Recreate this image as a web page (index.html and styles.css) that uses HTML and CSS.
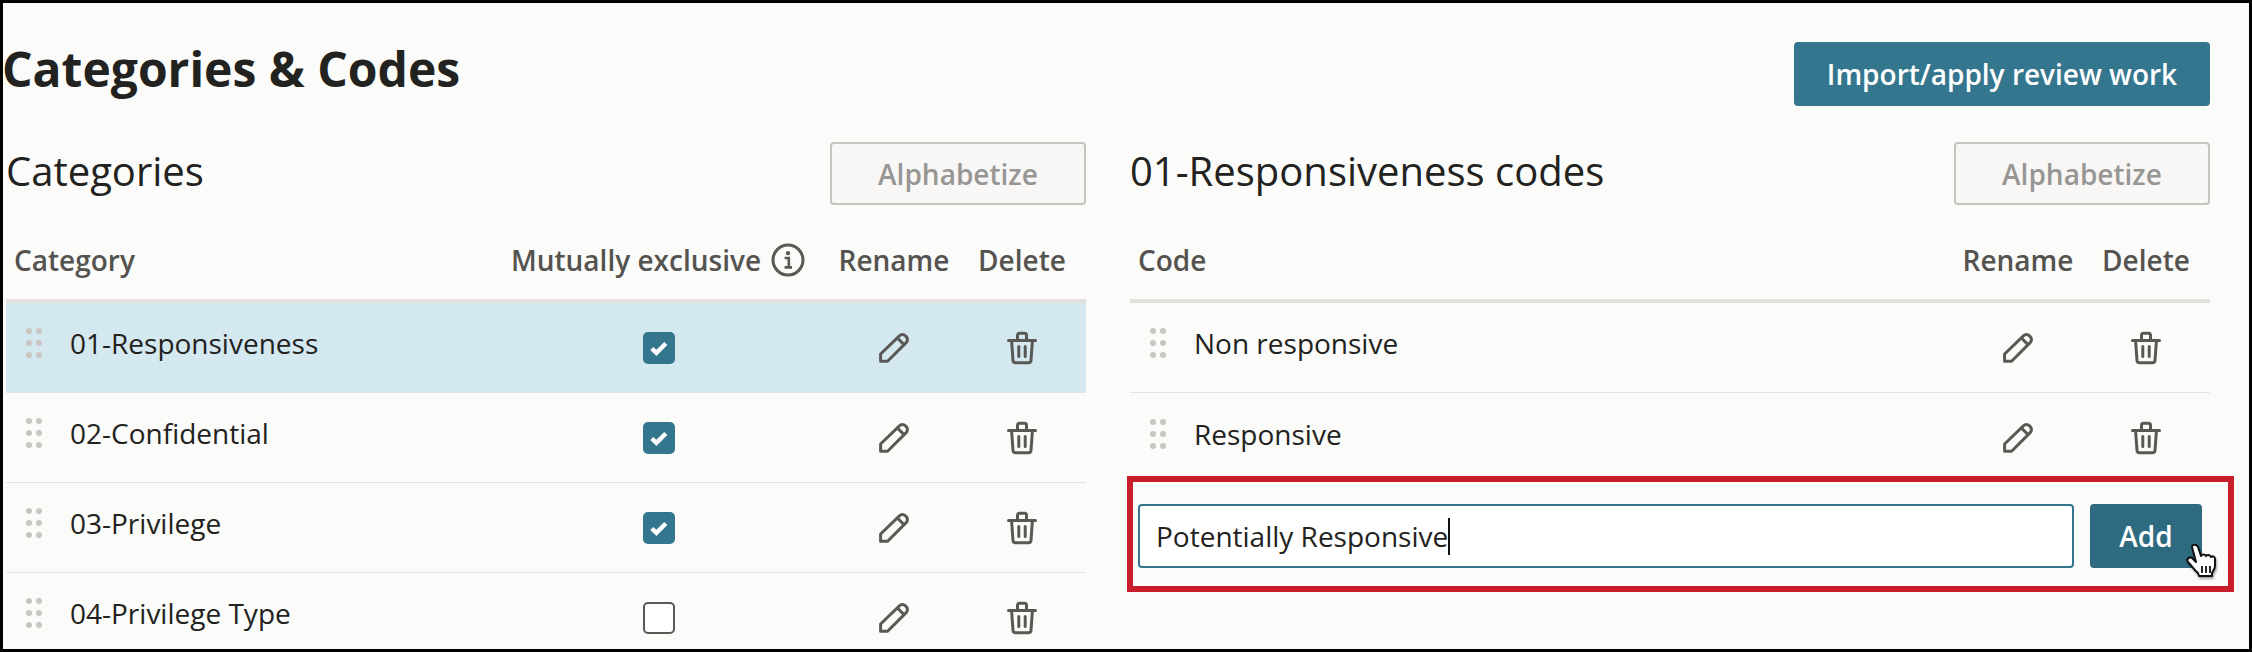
FILE: index.html
```html
<!DOCTYPE html>
<html lang="en">
<head>
<meta charset="utf-8">
<title>Categories &amp; Codes</title>
<link rel="stylesheet" href="styles.css">
</head>
<body>
<svg class="defs" width="0" height="0" aria-hidden="true">
  <defs>
    <symbol id="grip" viewBox="0 0 16 30"><g fill="#c9c6c2"><circle cx="3" cy="3" r="3"/><circle cx="13" cy="3" r="3"/><circle cx="3" cy="15" r="3"/><circle cx="13" cy="15" r="3"/><circle cx="3" cy="27" r="3"/><circle cx="13" cy="27" r="3"/></g></symbol>
    <symbol id="pencil" viewBox="0 0 30 30"><path d="M1.6 28.2V21L20.4 2.8a4.2 4.2 0 0 1 6 0l.8.8a4.2 4.2 0 0 1 0 6L8.6 28.2ZM18.4 5l6.6 6.6" fill="none" stroke="#5a5855" stroke-width="3" stroke-linejoin="round"/></symbol>
    <symbol id="trash" viewBox="0 0 30 34"><g fill="none" stroke="#5a5855" stroke-width="3" stroke-linecap="round" stroke-linejoin="round"><path d="M1.5 9.5h27M10.5 9V4.200a2 2 0 0 1 2-2h5a2 2 0 0 1 2 2V9M4.600 10l1.400 19.400a2.600 2.600 0 0 0 2.600 2.400h12.800a2.600 2.600 0 0 0 2.600-2.400L25.400 10M11.800 15.500v10M18.200 15.500v10"/></g></symbol>
    <symbol id="tick" viewBox="0 0 32 32"><path d="M8.800 16.500l4.600 4.400 9.400-9.400" fill="none" stroke="#fff" stroke-width="4.400"/></symbol>
  </defs>
</svg>
<main class="page">
  <header class="top">
    <h1 class="title">Categories &amp; Codes</h1>
    <button class="btn btn-primary btn-import" type="button">Import/apply review work</button>
  </header>
  <div class="panels">
    <section class="panel">
      <div class="panel-head">
        <h2 class="panel-title">Categories</h2>
        <button class="btn btn-muted" type="button">Alphabetize</button>
      </div>
      <div class="grid-row head-row has-mutual">
        <span class="col-name">Category</span>
        <span class="col-mid col-mutual">Mutually exclusive
          <svg class="info" viewBox="0 0 34 34" aria-hidden="true"><circle cx="17" cy="17" r="15" fill="none" stroke="#5a5855" stroke-width="3"/><circle cx="17" cy="10.200" r="2.100" fill="#5a5855"/><path d="M13.600 15h4.200v8.600M13.600 24.400h7.400" fill="none" stroke="#5a5855" stroke-width="2.600"/></svg>
        </span>
        <span class="col-mid">Rename</span>
        <span class="col-mid">Delete</span>
      </div>
      <div class="grid-row item-row has-mutual is-selected">
        <span class="cell-name"><svg class="grip"><use href="#grip"/></svg><span class="label">01-Responsiveness</span></span>
        <span class="box box-on"><svg><use href="#tick"/></svg></span>
        <svg class="icon-pencil"><use href="#pencil"/></svg>
        <svg class="icon-trash"><use href="#trash"/></svg>
      </div>
      <div class="grid-row item-row has-mutual">
        <span class="cell-name"><svg class="grip"><use href="#grip"/></svg><span class="label">02-Confidential</span></span>
        <span class="box box-on"><svg><use href="#tick"/></svg></span>
        <svg class="icon-pencil"><use href="#pencil"/></svg>
        <svg class="icon-trash"><use href="#trash"/></svg>
      </div>
      <div class="grid-row item-row has-mutual">
        <span class="cell-name"><svg class="grip"><use href="#grip"/></svg><span class="label">03-Privilege</span></span>
        <span class="box box-on"><svg><use href="#tick"/></svg></span>
        <svg class="icon-pencil"><use href="#pencil"/></svg>
        <svg class="icon-trash"><use href="#trash"/></svg>
      </div>
      <div class="grid-row item-row has-mutual">
        <span class="cell-name"><svg class="grip"><use href="#grip"/></svg><span class="label">04-Privilege Type</span></span>
        <span class="box"></span>
        <svg class="icon-pencil"><use href="#pencil"/></svg>
        <svg class="icon-trash"><use href="#trash"/></svg>
      </div>
    </section>
    <section class="panel">
      <div class="panel-head">
        <h2 class="panel-title">01-Responsiveness codes</h2>
        <button class="btn btn-muted" type="button">Alphabetize</button>
      </div>
      <div class="grid-row head-row">
        <span class="col-name">Code</span>
        <span class="col-mid">Rename</span>
        <span class="col-mid">Delete</span>
      </div>
      <div class="grid-row item-row">
        <span class="cell-name"><svg class="grip"><use href="#grip"/></svg><span class="label">Non responsive</span></span>
        <svg class="icon-pencil"><use href="#pencil"/></svg>
        <svg class="icon-trash"><use href="#trash"/></svg>
      </div>
      <div class="grid-row item-row item-last">
        <span class="cell-name"><svg class="grip"><use href="#grip"/></svg><span class="label">Responsive</span></span>
        <svg class="icon-pencil"><use href="#pencil"/></svg>
        <svg class="icon-trash"><use href="#trash"/></svg>
      </div>
      <div class="add-row">
        <div class="field">Potentially Responsive<span class="caret"></span></div>
        <button class="btn btn-add" type="button">Add</button>
        <span class="callout"></span>
        <svg class="hand" viewBox="0 0 32 36" aria-hidden="true"><path d="M6 3c0-3 5-3 6 0l3 9c1-2 4-2 5 0 1-2 4-1 5 1 1-1 4-1 4 2v7c0 3-2 5-3 7v3H13l-1-3C9 27 5 21 2 18c-2-2 1-6 4-4l4 4Z" fill="#fff" stroke="#111" stroke-width="2" stroke-linejoin="round"/><path d="M16 22v7M20 22v7M24 22v7" stroke="#111" stroke-width="1.800"/></svg>
      </div>
    </section>
  </div>
</main>
</body>
</html>
```
FILE: styles.css
```css
* { box-sizing: border-box; }
html, body { margin: 0; height: 100%; }
body {
  background: #fbfbf9;
  color: #222220;
  font-family: "Open Sans", "Noto Sans", sans-serif;
  overflow: hidden;
}
.defs { position: absolute; }
.page {
  height: 652px;
  border: 3px solid #000;
  padding: 39px 39px 0 0;
  overflow: hidden;
  background: #fbfbf9;
}
.top {
  display: flex;
  justify-content: space-between;
  align-items: center;
  height: 64px;
}
.title {
  margin: 0 0 11px -1px;
  font-size: 48px;
  line-height: 64px;
  font-weight: 700;
  color: #222220;
}
.btn {
  font-family: inherit;
  border-radius: 4px;
  font-size: 28px;
  font-weight: 600;
  cursor: pointer;
}
.btn-primary, .btn-add {
  background: #35768f;
  color: #fff;
  border: 0;
}
.btn-import { width: 416px; height: 64px; padding: 0; }
.panels {
  display: grid;
  grid-template-columns: 1080px 1080px;
  column-gap: 44px;
  margin-top: 36px;
  padding-left: 3px;
}
.panel-head {
  display: flex;
  justify-content: space-between;
  align-items: center;
  height: 63px;
}
.panel-title {
  margin: 0 0 6px;
  font-size: 40px;
  font-weight: 400;
  line-height: 50px;
}
.btn-muted {
  width: 256px;
  height: 63px;
  padding: 0;
  background: #f8f7f5;
  color: #979694;
  border: 2px solid #c4c3c0;
}
.grid-row {
  display: grid;
  grid-template-columns: 1fr 128px 128px;
  align-items: center;
  justify-items: center;
}
.has-mutual { grid-template-columns: 1fr 342px 128px 128px; }
.head-row {
  height: 98px;
  border-bottom: 4px solid #e2e1de;
  color: #555350;
  font-size: 28px;
  font-weight: 600;
  padding-top: 15px;
}
.col-name { justify-self: start; padding-left: 8px; }
.col-mid { white-space: nowrap; }
.col-mutual {
  display: inline-flex;
  align-items: center;
  gap: 10px;
  margin-right: 2px;
}
.info { width: 34px; height: 34px; }
.item-row {
  height: 90px;
  border-bottom: 1.5px solid #e4e3e0;
}
.item-last { border-bottom: 0; }
.is-selected { background: #d4e8ef; }
.cell-name {
  justify-self: start;
  display: flex;
  align-items: center;
  font-size: 28px;
  padding-left: 20px;
  padding-bottom: 9px;
  gap: 28px;
}
.grip { width: 16px; height: 30px; flex: none; }
.label { white-space: nowrap; }
.box {
  display: block;
  width: 32px;
  height: 32px;
  border-radius: 5px;
  border: 2px solid #5a5855;
  background: #fff;
}
.box-on { border: 0; background: #35768f; }
.box svg { display: block; width: 32px; height: 32px; }
.icon-pencil { width: 30px; height: 30px; }
.icon-trash { width: 30px; height: 34px; }
.add-row {
  position: relative;
  display: flex;
  gap: 16px;
  padding: 21px 8px 0;
}
.field {
  flex: 1;
  height: 64px;
  background: #fff;
  border: 2px solid #35768f;
  border-radius: 4px;
  padding-left: 16px;
  font-size: 28px;
  line-height: 60px;
  display: flex;
  align-items: center;
}
.caret { display: block; width: 2px; height: 37px; background: #111; }
.btn-add {
  width: 112px;
  height: 64px;
  padding: 0;
  background: #2f6b80;
}
.callout {
  position: absolute;
  left: -3px;
  right: -24px;
  top: -7px;
  height: 116px;
  border: 6px solid #c81e2b;
  pointer-events: none;
}
.hand {
  position: absolute;
  left: 1056px;
  top: 61px;
  width: 32px;
  height: 36px;
  filter: drop-shadow(1px 2px 1px rgba(0,0,0,.35));
}
```
